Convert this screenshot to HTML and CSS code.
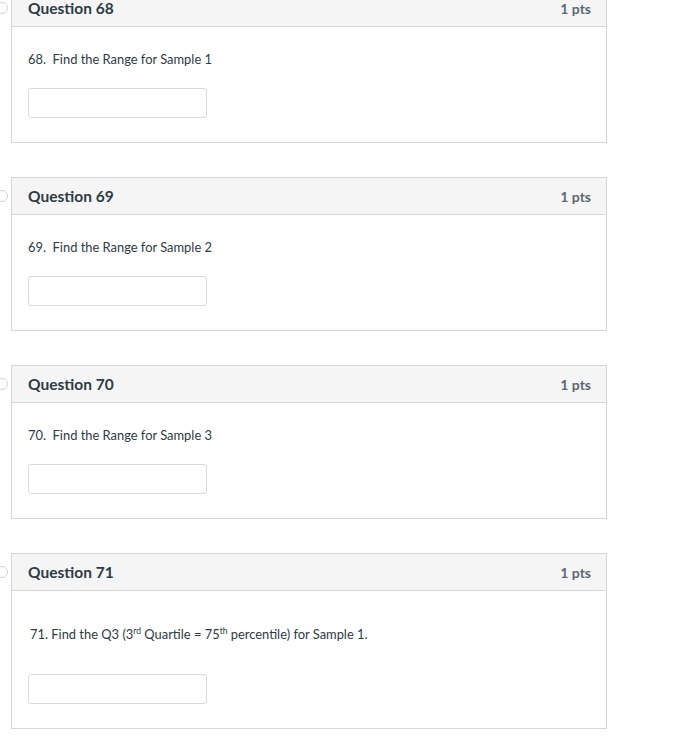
FILE: index.html
```html
<!DOCTYPE html>
<html>
<head>
<meta charset="utf-8">
<link rel="stylesheet" href="styles.css">
</head>
<body>
<div class="quiz">
  <div class="question">
    <span class="flag"></span>
    <div class="q-header"><span class="q-title">Question 68</span><span class="q-pts">1 pts</span></div>
    <div class="q-body">
      <p class="q-text">68.&nbsp; Find the Range for Sample 1</p>
      <div class="answer"></div>
    </div>
  </div>
  <div class="question">
    <span class="flag"></span>
    <div class="q-header"><span class="q-title">Question 69</span><span class="q-pts">1 pts</span></div>
    <div class="q-body">
      <p class="q-text">69.&nbsp; Find the Range for Sample 2</p>
      <div class="answer"></div>
    </div>
  </div>
  <div class="question">
    <span class="flag"></span>
    <div class="q-header"><span class="q-title">Question 70</span><span class="q-pts">1 pts</span></div>
    <div class="q-body">
      <p class="q-text">70.&nbsp; Find the Range for Sample 3</p>
      <div class="answer"></div>
    </div>
  </div>
  <div class="question">
    <span class="flag"></span>
    <div class="q-header"><span class="q-title">Question 71</span><span class="q-pts">1 pts</span></div>
    <div class="q-body q-body-tall">
      <p class="q-text q-text-indent">71. Find the Q3 (3<sup>rd</sup> Quartile = 75<sup>th</sup> percentile) for Sample 1.</p>
      <div class="answer answer-far"></div>
    </div>
  </div>
</div>
</body>
</html>
```
FILE: styles.css
```css
html, body {
  margin: 0;
  padding: 0;
  background: #fff;
}
body {
  font-family: Lato, "Liberation Sans", sans-serif;
  color: #2d3b45;
}
.quiz {
  margin-top: -11px;
  padding-left: 11px;
  width: 596px;
  display: flex;
  flex-direction: column;
  gap: 34px;
}
.question {
  position: relative;
  border: 1px solid #d3d7da;
  box-sizing: border-box;
}
.flag {
  position: absolute;
  left: -16px;
  top: 12px;
  width: 10px;
  height: 10px;
  border: 1px solid #d0d5d8;
  border-radius: 50%;
  background: #fff;
}
.q-header {
  height: 36px;
  background: #f5f5f5;
  border-bottom: 1px solid #d3d7da;
  display: flex;
  align-items: center;
  justify-content: space-between;
  padding: 0 15px 0 16px;
}
.q-title {
  font-weight: 700;
  font-size: 15.5px;
  color: #2d3b45;
}
.q-pts {
  font-weight: 700;
  font-size: 14px;
  color: #5b6770;
}
.q-body {
  padding: 22px 16px 24px;
}
.q-body-tall {
  padding-top: 33px;
}
.q-text {
  margin: 0;
  font-size: 12.9px;
  line-height: 20px;
  color: #2d3b45;
  word-spacing: 0;
}
.q-text-indent {
  padding-left: 2px;
}
.q-text sup {
  font-size: 8.5px;
  line-height: 0;
  vertical-align: 5px;
}
.answer {
  margin-top: 19px;
  width: 179px;
  height: 30px;
  box-sizing: border-box;
  border: 1px solid #d6dadd;
  border-radius: 3px;
  background: #fff;
}
.answer-far {
  margin-top: 30px;
}
```
